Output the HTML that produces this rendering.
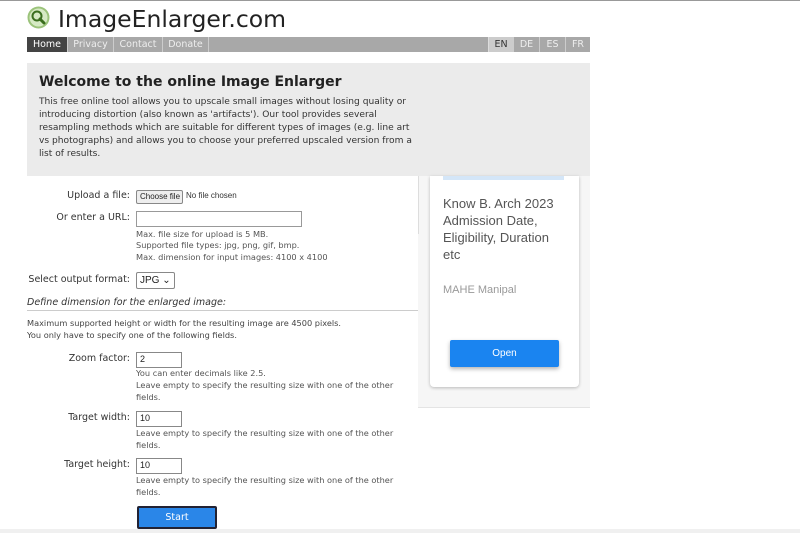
<!DOCTYPE html>
<html><head><meta charset="utf-8"><style>
*{margin:0;padding:0;box-sizing:border-box}
body{width:800px;height:533px;background:#fff;position:relative;overflow:hidden;font-family:"DejaVu Sans","Liberation Sans",sans-serif;color:#222}
.a{position:absolute;white-space:nowrap}
.nav{position:absolute;top:37px;height:15px;font-size:9.5px;color:#eee;line-height:15px;text-align:center;border-right:1px solid #ccc}
.lbl{position:absolute;font-size:9.5px;color:#333;text-align:right;width:130px;left:0}
.sm{position:absolute;font-size:8.2px;color:#555;left:136px;white-space:nowrap}
.inp{position:absolute;border:1px solid #888;background:#fff;font-size:9px;padding-left:3px;line-height:13px;font-family:"Liberation Sans",sans-serif}
</style></head><body>
<div class="a" style="left:0;top:0;width:800px;height:1px;background:#999"></div>
<svg class="a" style="left:27px;top:6px" width="23" height="23" viewBox="0 0 23 23"><circle cx="11.5" cy="11.5" r="11" fill="#9bc37a"/><circle cx="11.5" cy="11.5" r="9" fill="#d6eac4"/><circle cx="10" cy="10" r="4.5" fill="none" stroke="#3a6e1e" stroke-width="2"/><line x1="13" y1="13" x2="17" y2="17" stroke="#3a6e1e" stroke-width="3" stroke-linecap="round"/></svg>
<div class="a" style="left:58px;top:5px;font-size:23.5px;color:#222">ImageEnlarger.com</div>
<div class="a" style="left:27px;top:37px;width:563px;height:15px;background:#a8a8a8"></div>
<div class="nav" style="left:27px;width:41px;background:#444;color:#fff">Home</div>
<div class="nav" style="left:68px;width:46px">Privacy</div>
<div class="nav" style="left:114px;width:49px">Contact</div>
<div class="nav" style="left:163px;width:46px">Donate</div>
<div class="nav" style="left:488px;width:26px;background:#ccc;color:#333;border-left:1px solid #ddd">EN</div>
<div class="nav" style="left:514px;width:26px">DE</div>
<div class="nav" style="left:540px;width:26px">ES</div>
<div class="nav" style="left:566px;width:24px;border:none">FR</div>
<div class="a" style="left:27px;top:63px;width:563px;height:113px;background:#ebebeb"></div>
<div class="a" style="left:39px;top:74px;font-size:14px;font-weight:bold;color:#222">Welcome to the online Image Enlarger</div>
<div class="a" style="left:39px;top:96px;font-size:9.1px;line-height:13px;color:#333;white-space:normal;width:379px">This free online tool allows you to upscale small images without losing quality or introducing distortion (also known as 'artifacts'). Our tool provides several resampling methods which are suitable for different types of images (e.g. line art vs photographs) and allows you to choose your preferred upscaled version from a list of results.</div>
<div class="a" style="left:418px;top:176px;width:172px;height:232px;background:#f6f6f6;border-bottom:1px solid #e4e4e4"></div>
<div class="a" style="left:430px;top:176px;width:149px;height:211px;background:#fff;border-radius:0 0 4px 4px;box-shadow:0 1px 3px rgba(0,0,0,.25)"></div>
<div class="a" style="left:443px;top:176px;width:121px;height:4px;background:#d4e6f8"></div>
<div class="a" style="left:443px;top:195px;font-family:'Liberation Sans',sans-serif;font-size:13px;line-height:17px;color:#555;white-space:normal;width:118px">Know B. Arch 2023 Admission Date, Eligibility, Duration etc</div>
<div class="a" style="left:443px;top:284px;font-family:'Liberation Sans',sans-serif;font-size:11px;color:#999">MAHE Manipal</div>
<div class="a" style="left:450px;top:340px;width:109px;height:27px;background:#1a84f0;border-radius:2px;box-shadow:0 2px 4px rgba(0,0,0,.3);color:#fff;font-family:'Liberation Sans',sans-serif;font-size:10px;text-align:center;line-height:27px">Open</div>
<div class="lbl" style="top:190px">Upload a file:</div>
<div class="inp" style="left:136px;top:190px;width:47px;height:14px;background:#eee;font-size:8px;line-height:12px;border-radius:2px">Choose file</div>
<div class="a" style="left:186px;top:191px;font-family:'Liberation Sans',sans-serif;font-size:8px;color:#333">No file chosen</div>
<div class="lbl" style="top:212px">Or enter a URL:</div>
<div class="inp" style="left:136px;top:211px;width:166px;height:16px;border-color:#999"></div>
<div class="sm" style="top:229px">Max. file size for upload is 5 MB.</div>
<div class="sm" style="top:240px">Supported file types: jpg, png, gif, bmp.</div>
<div class="sm" style="top:252px">Max. dimension for input images: 4100 x 4100</div>
<div class="lbl" style="top:274px">Select output format:</div>
<div class="inp" style="left:136px;top:272px;width:39px;height:17px;border-radius:2px;line-height:15px;font-size:10px">JPG ⌄</div>
<div class="a" style="left:27px;top:297px;font-size:9.5px;font-style:italic;color:#333">Define dimension for the enlarged image:</div>
<div class="a" style="left:27px;top:310px;width:391px;height:1px;background:#ccc"></div>
<div class="a" style="left:418px;top:176px;width:1px;height:58px;background:#ddd"></div>
<div class="a" style="left:27px;top:318px;font-size:8.2px;line-height:11.5px;color:#444">Maximum supported height or width for the resulting image are 4500 pixels.<br>You only have to specify one of the following fields.</div>
<div class="lbl" style="top:353px">Zoom factor:</div>
<div class="inp" style="left:136px;top:352px;width:46px;height:16px">2</div>
<div class="sm" style="top:367px;line-height:12px">You can enter decimals like 2.5.<br>Leave empty to specify the resulting size with one of the other<br>fields.</div>
<div class="lbl" style="top:412px">Target width:</div>
<div class="inp" style="left:136px;top:411px;width:46px;height:16px">10</div>
<div class="sm" style="top:427px;line-height:12px">Leave empty to specify the resulting size with one of the other<br>fields.</div>
<div class="lbl" style="top:459px">Target height:</div>
<div class="inp" style="left:136px;top:458px;width:46px;height:16px">10</div>
<div class="sm" style="top:474px;line-height:12px">Leave empty to specify the resulting size with one of the other<br>fields.</div>
<div class="a" style="left:137px;top:506px;width:80px;height:23px;background:#2a86e8;border:2px solid #223;border-radius:2px;color:#fff;font-size:9.5px;text-align:center;line-height:19px">Start</div>
<div class="a" style="left:0;top:529px;width:800px;height:4px;background:#f0f0f0"></div>
</body></html>
